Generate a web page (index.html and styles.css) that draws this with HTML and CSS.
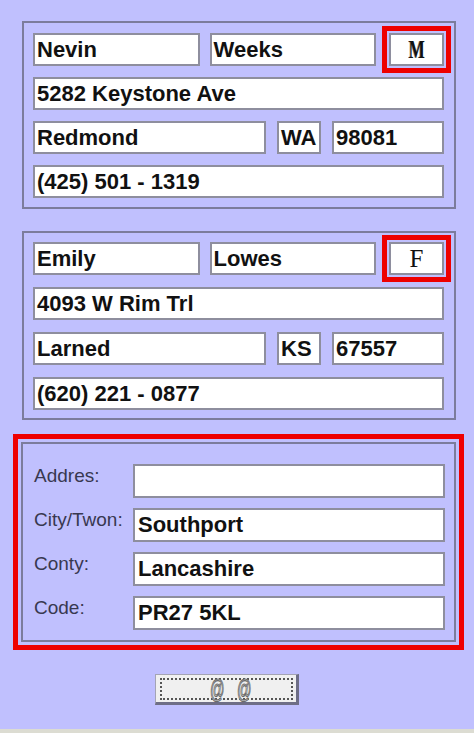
FILE: index.html
```html
<!DOCTYPE html>
<html lang="en">
<head>
<meta charset="utf-8">
<title>Address cards</title>
<link rel="stylesheet" href="styles.css">
</head>
<body>
<div class="page">
  <div class="card card-first">
    <div class="row">
      <div class="field w-first">Nevin</div>
      <div class="field w-last">Weeks</div>
      <div class="field gender flagged"><span class="glyph-m">M</span></div>
    </div>
    <div class="row">
      <div class="field w-full">5282 Keystone Ave</div>
    </div>
    <div class="row">
      <div class="field w-city">Redmond</div>
      <div class="field w-state">WA</div>
      <div class="field w-zip">98081</div>
    </div>
    <div class="row">
      <div class="field w-full">(425) 501 - 1319</div>
    </div>
  </div>

  <div class="card card-second">
    <div class="row">
      <div class="field w-first">Emily</div>
      <div class="field w-last">Lowes</div>
      <div class="field gender flagged"><span class="glyph-f">F</span></div>
    </div>
    <div class="row">
      <div class="field w-full">4093 W Rim Trl</div>
    </div>
    <div class="row">
      <div class="field w-city">Larned</div>
      <div class="field w-state">KS</div>
      <div class="field w-zip">67557</div>
    </div>
    <div class="row">
      <div class="field w-full">(620) 221 - 0877</div>
    </div>
  </div>

  <div class="card card-form flagged-frame">
    <div class="form-row">
      <span class="label">Addres:</span>
      <div class="field tall"></div>
    </div>
    <div class="form-row">
      <span class="label">City/Twon:</span>
      <div class="field tall">Southport</div>
    </div>
    <div class="form-row">
      <span class="label">Conty:</span>
      <div class="field tall">Lancashire</div>
    </div>
    <div class="form-row">
      <span class="label">Code:</span>
      <div class="field tall">PR27 5KL</div>
    </div>
  </div>

  <div class="actions">
    <button class="btn" type="button"><span class="btn-focus"><span class="at">@</span><span class="at">@</span></span></button>
  </div>
</div>
</body>
</html>
```

FILE: styles.css
```css
html {
  background: #dcdcd2;
}
body {
  margin: 0;
  font-family: "Liberation Sans", Arial, sans-serif;
}
.page {
  height: 729px;
  box-sizing: border-box;
  background: #c0c0fe;
  padding: 21px 18px 0 22px;
}
.card {
  width: 434px;
  box-sizing: border-box;
  border: 2px solid #7c7c9c;
  display: flex;
  flex-direction: column;
}
.card-first {
  padding: 10px 10px 9px 9px;
  gap: 11px;
}
.card-second {
  margin-top: 22px;
  padding: 9px 10px 8px 9px;
  gap: 12px;
}
.row {
  display: flex;
  height: 33px;
}
.field {
  box-sizing: border-box;
  height: 33px;
  border: 2px solid #8e8e9e;
  background: #ffffff;
  color: #111111;
  font-weight: bold;
  font-size: 22px;
  line-height: 29px;
  padding: 0 2px;
  white-space: nowrap;
  overflow: hidden;
}
.w-first { width: 167px; }
.w-last { width: 167px; margin-left: 10px; }
.gender {
  width: 55px;
  margin-left: 13px;
  text-align: center;
  font-family: "Liberation Serif", "Times New Roman", serif;
  font-weight: normal;
  font-size: 25px;
  overflow: visible;
}
.flagged {
  outline: 5px solid #ee0000;
  outline-offset: 2px;
}
.glyph-m {
  display: inline-block;
  font-weight: bold;
  transform: scaleX(0.68);
  text-shadow: -1px 0 #8a8a8a;
}
.glyph-f {
  display: inline-block;
}
.w-full { width: 411px; }
.w-city { width: 233px; }
.w-state { width: 44px; margin-left: 11px; }
.w-zip { width: 112px; margin-left: 11px; }

.card-form {
  margin-top: 22px;
  margin-left: -1px;
  width: 435px;
  padding: 20px 9px 10px 11px;
  gap: 10px;
}
.flagged-frame {
  outline: 5px solid #ee0000;
  outline-offset: 3px;
}
.form-row {
  display: grid;
  grid-template-columns: 99px 1fr;
  align-items: start;
}
.label {
  font-size: 19px;
  line-height: 22px;
  margin-top: 1px;
  color: #383850;
  white-space: nowrap;
}
.field.tall {
  height: 34px;
  line-height: 30px;
  padding: 0 3px;
}
.actions {
  display: flex;
  margin-top: 32px;
  padding-left: 133px;
}
.btn {
  width: 144px;
  height: 31px;
  box-sizing: border-box;
  padding: 3px 3px 2px 4px;
  background: #f0f0f0;
  border-style: solid;
  border-width: 1px 3px 3px 1px;
  border-color: #a4a4b4 #6e6e86 #6e6e86 #a4a4b4;
  display: flex;
  cursor: pointer;
}
.btn-focus {
  flex: 1;
  border: 2px dotted #555555;
  display: flex;
  justify-content: center;
  align-items: center;
}
.at {
  display: inline-block;
  width: 13px;
  text-align: center;
  font-family: "Liberation Sans", Arial, sans-serif;
  font-size: 26px;
  line-height: 22px;
  color: #efefef;
  -webkit-text-stroke: 1.2px #6a6a6a;
  transform: scaleX(0.55);
}
.at + .at {
  margin-left: 14px;
}
```
